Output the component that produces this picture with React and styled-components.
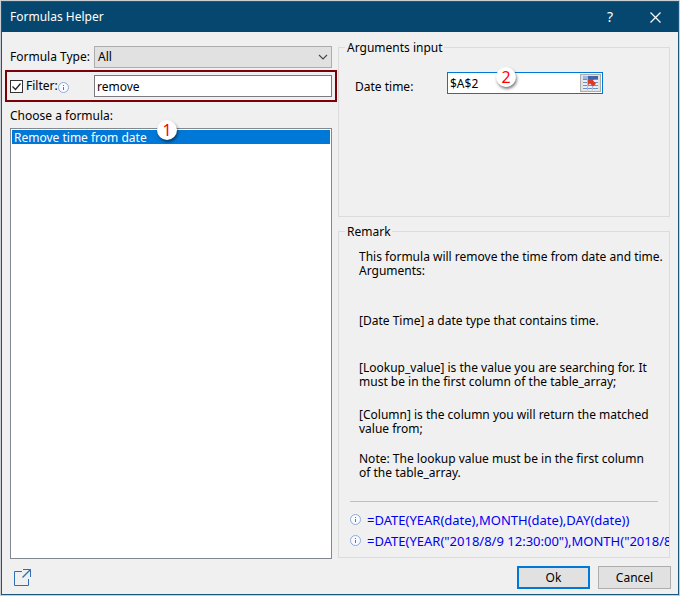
import React, { useState } from "react";
import styled, { createGlobalStyle } from "styled-components";

const GlobalStyle = createGlobalStyle`
  * {
    box-sizing: border-box;
  }

  body {
    margin: 0;
    background: #c9cfd2;
    font-family: "Noto Sans", Tahoma, sans-serif;
    font-size: 12px;
    line-height: 14px;
    color: #000;
  }

  button,
  input,
  select {
    font: inherit;
    color: inherit;
    border-radius: 0;
    margin: 0;
  }
`;

const Page = styled.div`
  display: flex;
  min-height: 100vh;
  padding: 1px;
`;

const Dialog = styled.main`
  flex: 1;
  min-width: 0;
  display: flex;
  flex-direction: column;
  background: #f0f0f0;
  border: 1px solid #1b567d;
`;

const TitleBar = styled.header`
  display: flex;
  align-items: center;
  height: 30px;
  padding: 0 13px 0 8px;
  background: #05476f;
  color: #fff;
`;

const Title = styled.h1`
  flex: 1;
  margin: 0;
  font-size: 12px;
  font-weight: normal;
`;

const TitleButton = styled.button`
  display: flex;
  align-items: center;
  justify-content: center;
  width: 20px;
  height: 28px;
  margin-left: ${(props) => (props.$spaced ? "25px" : "0")};
  padding: 0;
  border: none;
  background: none;
  font-size: 14px;
`;

const Body = styled.div`
  flex: 1;
  display: grid;
  grid-template-columns: minmax(0, 1fr) minmax(0, 1fr);
  column-gap: 1px;
  padding: 0 8px 0 3px;
`;

const LeftPane = styled.section`
  display: flex;
  flex-direction: column;
  padding-top: 14px;
`;

const RightPane = styled.section`
  display: flex;
  flex-direction: column;
  gap: 6px;
  padding: 7px 0 1px;
`;

const Row = styled.div`
  display: flex;
  align-items: center;
  padding: 0 5px;
`;

const FilterRow = styled(Row)`
  margin-top: 2px;
  padding: 3px;
  border: 2px solid #7c0007;
`;

const RowLabel = styled.div`
  display: flex;
  align-items: center;
  flex: 0 0 84px;
  white-space: nowrap;
`;

const SelectWrap = styled.div`
  position: relative;
  flex: 1;

  svg {
    position: absolute;
    right: 4px;
    top: 8px;
    pointer-events: none;
  }
`;

const Select = styled.select`
  display: block;
  appearance: none;
  width: 100%;
  height: 22px;
  padding: 0 3px;
  border: 1px solid #adadad;
  background: #e1e1e1;
`;

const TextInput = styled.input`
  flex: 1;
  min-width: 0;
  height: 22px;
  padding: 0 2px;
  border: 1px solid #7a7a7f;
  background: #fff;
  outline: none;
`;

const Checkbox = styled.input`
  appearance: none;
  width: 13px;
  height: 13px;
  margin-right: 3px;
  border: 1px solid #333;
  background: #fff;

  &:checked {
    background: #fff
      url("data:image/svg+xml,%3Csvg xmlns='http://www.w3.org/2000/svg' width='11' height='11'%3E%3Cpath d='M1.5 5.5l3 3 5-6' fill='none' stroke='%23222' stroke-width='1.2'/%3E%3C/svg%3E");
  }
`;

const InfoButton = styled.button`
  display: flex;
  padding: 0;
  border: none;
  background: none;
`;

const FilterInfo = styled(InfoButton)`
  padding-top: 3px;
`;

const ListHeading = styled.h2`
  height: 26px;
  margin: 0;
  padding: 0 5px;
  font-size: 12px;
  font-weight: normal;
  line-height: 28px;
`;

const List = styled.ul`
  flex: 1;
  margin: 0 5px;
  padding: 1px;
  list-style: none;
  border: 1px solid #828790;
  background: #fff;
`;

const ListItem = styled.li`
  position: relative;
  height: 14px;
  padding: 0 2px;
  background: #0078d7;
  color: #fff;
  line-height: 16px;
`;

const Badge = styled.span`
  position: absolute;
  top: ${(props) => props.$top};
  left: ${(props) => props.$left};
  width: 20px;
  height: 20px;
  border-radius: 50%;
  background: #fff;
  box-shadow: 1px 2px 3px rgba(0, 0, 0, 0.5);
  color: #f00;
  font-size: 16px;
  line-height: 20px;
  text-align: center;
`;

const Group = styled.fieldset`
  flex: ${(props) => (props.$grow ? "1" : "none")};
  min-width: 0;
  min-height: 178px;
  margin: 0;
  padding: 0;
  border: 1px solid #dcdcdc;
`;

const Legend = styled.legend`
  margin-left: 6px;
  padding: 2px 1px 0 2px;
`;

const ArgumentRow = styled.div`
  display: flex;
  padding: 17px 16px 0;
`;

const ArgumentLabel = styled.label`
  flex: 0 0 92px;
  padding-top: 8px;
`;

const CellInput = styled.div`
  position: relative;
  flex: 0 1 156px;
  min-width: 0;
  display: flex;
  align-items: center;
  height: 22px;
  padding-right: 1px;
  border: 1px solid #0078d7;
  background: #fff;

  input {
    height: 20px;
    border: none;
  }
`;

const PickButton = styled.button`
  flex: none;
  display: flex;
  align-items: center;
  justify-content: center;
  width: 21px;
  height: 18px;
  padding: 0;
  border: 1px solid #adadad;
  background: #e1e1e1;
`;

const Remark = styled.div`
  padding: 11px 4px 0 20px;
`;

const Paragraph = styled.p`
  margin: 0 0 ${(props) => props.$after};
  white-space: pre-line;
`;

const Divider = styled.hr`
  margin: 0 11px 7px;
  border: none;
  border-top: 1px solid #bfbfbf;
`;

const FormulaLine = styled.div`
  display: flex;
  align-items: center;
  gap: 6px;
  height: 21px;
  padding-left: 11px;
  overflow: hidden;
  color: #0000f0;
  font-size: 13px;
  white-space: nowrap;
`;

const Footer = styled.footer`
  display: flex;
  align-items: center;
  gap: 8px;
  height: 35px;
  padding: 2px 7px 0 12px;
`;

const OpenLink = styled.a`
  display: flex;
  margin-right: auto;
`;

const Button = styled.button`
  width: 73px;
  height: 23px;
  padding: 0;
  border: ${(props) => (props.$primary ? "2px solid #0078d7" : "1px solid #adadad")};
  background: #e1e1e1;
`;

const InfoIcon = () => (
  <svg width="11" height="11" viewBox="0 0 11 11">
    <circle cx="5.5" cy="5.5" r="5" fill="#f8faff" stroke="#8fabd8" />
    <path d="M5 3h1v1H5zM5 5h1v3H5z" fill="#5b78ac" />
  </svg>
);

const ChevronIcon = () => (
  <svg width="10" height="7" viewBox="0 0 10 7">
    <path d="M1 1l4 4 4-4" fill="none" stroke="#444" strokeWidth="1.1" />
  </svg>
);

const CloseIcon = () => (
  <svg width="11" height="11" viewBox="0 0 11 11">
    <path d="M0.5 0.5l10 10M10.5 0.5l-10 10" stroke="#fff" strokeWidth="1.2" />
  </svg>
);

const RangeIcon = () => (
  <svg width="15" height="14" viewBox="0 0 15 14">
    <rect width="15" height="14" fill="#e6eefb" />
    <path d="M0 3.5h15M0 6.5h15M0 9.5h15M0 12.5h15" stroke="#6f8fc4" />
    <path d="M4.5 0v14M9.5 0v14" stroke="#a9bcdd" />
    <path d="M5 0h10v3H5z" fill="#3f64a8" />
    <path d="M0 0h5v3H0z" fill="#9db8e6" />
    <path d="M5 3h6l-1 1.5 3 3-3 3-3-3L5 9z" fill="#dc3926" />
  </svg>
);

const OpenIcon = () => (
  <svg width="18" height="18" viewBox="0 0 18 18" fill="none" stroke="#2f6db5">
    <path d="M8 2.5H0.5v14h14V10" />
    <path d="M9 0.5h7.5V8" />
    <path d="M8.5 8.5l8-8" strokeWidth="1.2" />
  </svg>
);

const remarks = [
  { text: "This formula will remove the time from date and time.\nArguments:", after: "36px" },
  { text: "[Date Time] a date type that contains time.", after: "33px" },
  {
    text: "[Lookup_value] is the value you are searching for. It\nmust be in the first column of the table_array;",
    after: "19px",
  },
  { text: "[Column] is the column you will return the matched\nvalue from;", after: "16px" },
  { text: "Note: The lookup value must be in the first column\nof the table_array.", after: "21px" },
];

const formulas = [
  "=DATE(YEAR(date),MONTH(date),DAY(date))",
  '=DATE(YEAR("2018/8/9 12:30:00"),MONTH("2018/8/9',
];

const App = () => {
  const [filterOn, setFilterOn] = useState(true);
  const [filter, setFilter] = useState("remove");
  const [cell, setCell] = useState("$A$2");

  return (
    <Page>
      <GlobalStyle />
      <Dialog>
        <TitleBar>
          <Title>Formulas Helper</Title>
          <TitleButton aria-label="Help">?</TitleButton>
          <TitleButton $spaced aria-label="Close">
            <CloseIcon />
          </TitleButton>
        </TitleBar>

        <Body>
          <LeftPane>
            <Row>
              <RowLabel>
                <label htmlFor="type">Formula Type:</label>
              </RowLabel>
              <SelectWrap>
                <Select id="type">
                  <option>All</option>
                </Select>
                <ChevronIcon />
              </SelectWrap>
            </Row>
            <FilterRow>
              <RowLabel>
                <Checkbox
                  id="filterOn"
                  type="checkbox"
                  checked={filterOn}
                  onChange={(e) => setFilterOn(e.target.checked)}
                />
                <label htmlFor="filterOn">Filter:</label>
                <FilterInfo aria-label="About the filter">
                  <InfoIcon />
                </FilterInfo>
              </RowLabel>
              <TextInput
                aria-label="Filter text"
                value={filter}
                disabled={!filterOn}
                onChange={(e) => setFilter(e.target.value)}
              />
            </FilterRow>
            <ListHeading>Choose a formula:</ListHeading>
            <List>
              <ListItem>
                Remove time from date
                <Badge $top="-10px" $left="145px">1</Badge>
              </ListItem>
            </List>
          </LeftPane>

          <RightPane>
            <Group>
              <Legend>Arguments input</Legend>
              <ArgumentRow>
                <ArgumentLabel htmlFor="cell">Date time:</ArgumentLabel>
                <CellInput>
                  <TextInput id="cell" value={cell} onChange={(e) => setCell(e.target.value)} />
                  <PickButton aria-label="Select range">
                    <RangeIcon />
                  </PickButton>
                  <Badge $top="-6px" $left="48px">2</Badge>
                </CellInput>
              </ArgumentRow>
            </Group>

            <Group $grow>
              <Legend>Remark</Legend>
              <Remark>
                {remarks.map((r) => (
                  <Paragraph key={r.text} $after={r.after}>
                    {r.text}
                  </Paragraph>
                ))}
              </Remark>
              <Divider />
              {formulas.map((f) => (
                <FormulaLine key={f}>
                  <InfoButton aria-label="About this formula">
                    <InfoIcon />
                  </InfoButton>
                  {f}
                </FormulaLine>
              ))}
            </Group>
          </RightPane>
        </Body>

        <Footer>
          <OpenLink href="#" aria-label="Open in a new window">
            <OpenIcon />
          </OpenLink>
          <Button $primary>Ok</Button>
          <Button>Cancel</Button>
        </Footer>
      </Dialog>
    </Page>
  );
};

export default App;
